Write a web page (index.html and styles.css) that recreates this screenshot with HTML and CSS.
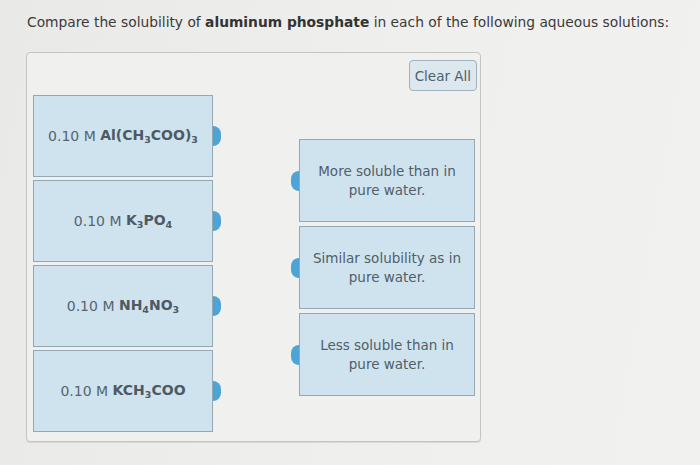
FILE: index.html
```html
<!DOCTYPE html>
<html lang="en">

<head>
    <meta charset="UTF-8" />
    <title>Solubility</title>
    <link rel="stylesheet" href="styles.css">
</head>

<body>
    <p class="prompt">Compare the solubility of <b>aluminum phosphate</b> in each of the following aqueous solutions:</p>

    <div class="board">
        <div class="board-top">
            <button class="clear-btn">Clear All</button>
        </div>

        <div class="board-cols">
            <div class="col col-left">
                <div class="tile">0.10 M&nbsp;<b>Al(CH<sub>3</sub>COO)<sub>3</sub></b><span class="tab tab-right"></span></div>
                <div class="tile">0.10 M&nbsp;<b>K<sub>3</sub>PO<sub>4</sub></b><span class="tab tab-right"></span></div>
                <div class="tile">0.10 M&nbsp;<b>NH<sub>4</sub>NO<sub>3</sub></b><span class="tab tab-right"></span></div>
                <div class="tile">0.10 M&nbsp;<b>KCH<sub>3</sub>COO</b><span class="tab tab-right"></span></div>
            </div>

            <div class="col col-right">
                <div class="tile target"><span class="tab tab-left"></span>More soluble than in<br>pure water.</div>
                <div class="tile target"><span class="tab tab-left"></span>Similar solubility as in<br>pure water.</div>
                <div class="tile target"><span class="tab tab-left"></span>Less soluble than in<br>pure water.</div>
            </div>
        </div>
    </div>
</body>

</html>
```

FILE: styles.css
```css
body {
    margin: 0;
    padding: 0;
    height: 465px;
    background: linear-gradient(100deg, #e9e9e7 0%, #efefed 55%, #f1f1ef 100%);
    font-family: 'DejaVu Sans', Verdana, sans-serif;
    color: #3c3c3c;
    overflow: hidden;
}

.prompt {
    margin: 0;
    padding: 14px 0 0 27px;
    font-size: 13.8px;
    color: #3a3a3a;
}

.prompt b {
    color: #333;
}

/* drag-and-drop board */
.board {
    margin: 22px 0 0 26px;
    width: 453px;
    height: 388px;
    border: 1px solid #c4c4c2;
    border-radius: 4px;
    background: #f0f0ee;
    box-shadow: 0 1px 0 #d8d8d6;
}

.board-top {
    display: flex;
    justify-content: flex-end;
    padding: 7px 3px 0 0;
}

.clear-btn {
    height: 31px;
    padding: 0 5px;
    font-family: 'DejaVu Sans', Verdana, sans-serif;
    font-size: 13.5px;
    color: #4f5f6b;
    background: #dce8ee;
    border: 1px solid #9fb2bd;
    border-radius: 4px;
}

.board-cols {
    display: flex;
    gap: 86px;
    padding: 4px 0 0 6px;
}

.col {
    display: flex;
    flex-direction: column;
}

.col-left {
    gap: 3px;
    width: 180px;
}

.col-left .tile {
    height: 80px;
    font-size: 14px;
}

.col-right {
    gap: 4px;
    width: 176px;
    margin-top: 44px;
}

.tile {
    position: relative;
    display: flex;
    justify-content: center;
    align-items: center;
    height: 81px;
    background: #cfe3ee;
    border: 1px solid #93a8b3;
    font-size: 13px;
    color: #566470;
    text-align: center;
}

.tile b {
    color: #4d5963;
}

.tile sub {
    font-size: 9.5px;
    vertical-align: -3px;
}

.target {
    font-size: 13.5px;
    line-height: 19px;
    color: #505e69;
}

/* connector nubs */
.tab {
    position: absolute;
    top: 50%;
    width: 8px;
    height: 20px;
    margin-top: -10px;
    background: #4ea4d4;
}

.tab-right {
    right: -9px;
    border-radius: 0 10px 10px 0;
}

.tab-left {
    left: -9px;
    border-radius: 10px 0 0 10px;
}
```
